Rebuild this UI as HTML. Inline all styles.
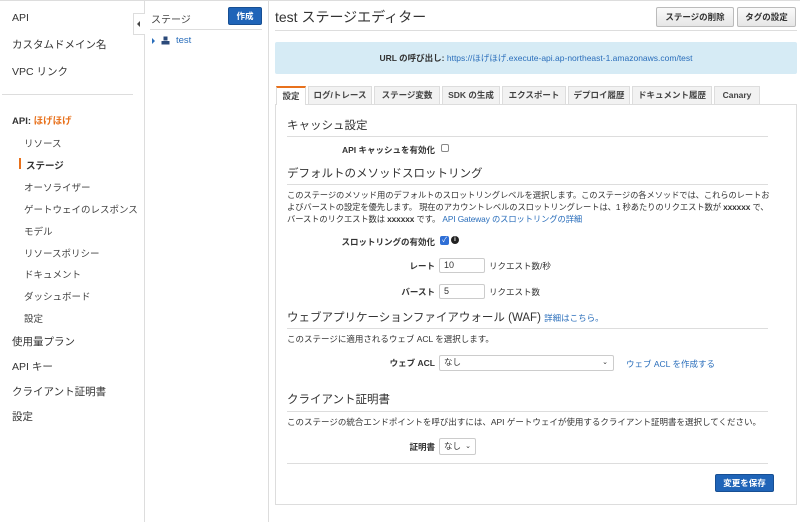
<!DOCTYPE html>
<html><head><meta charset="utf-8"><style>
*{box-sizing:border-box;margin:0;padding:0}
body{width:800px;height:522px;background:#fff;font-family:"Liberation Sans","Noto Sans CJK JP",sans-serif;color:#333;position:relative;overflow:hidden;font-size:9px}
.a{position:absolute;white-space:nowrap}
.nav{font-size:10.5px;color:#333}
.sub{font-size:9.5px;color:#444}
.btn{position:absolute;border:1px solid #bbb;border-radius:2px;background:linear-gradient(#fafafa,#e6e6e6);font-size:8.5px;font-weight:bold;color:#333;text-align:center}
.pbtn{position:absolute;background:#1f64b8;border:1px solid #174f93;border-radius:2px;color:#fff;font-weight:bold;font-size:8.5px;text-align:center}
.tab{position:absolute;top:86px;height:18px;background:#f2f2f2;border:1px solid #ddd;border-bottom:none;font-size:8.5px;font-weight:bold;color:#444;text-align:center;line-height:17px}
.h{position:absolute;font-size:11.5px;color:#333;left:287px}
.line{position:absolute;left:287px;width:481px;height:1px;background:#ddd}
.lbl{position:absolute;font-size:8.5px;font-weight:bold;color:#333;text-align:right;white-space:nowrap}
.inp{position:absolute;border:1px solid #ccc;border-radius:2px;background:#fff;font-size:9px;padding-left:4px;line-height:13px}
.link{color:#2a6ebb}
</style></head><body>
<div class="a" style="left:0;top:0;width:800px;height:1px;background:#ddd"></div>
<div class="a" style="left:144px;top:0;width:1px;height:522px;background:#ddd"></div>
<div class="a" style="left:268px;top:0;width:1px;height:522px;background:#ddd"></div>
<div class="a" style="left:133px;top:13px;width:12px;height:22px;background:#fff;border:1px solid #ddd;border-right:none"></div>
<div class="a" style="left:137px;top:21px;width:0;height:0;border-top:3px solid transparent;border-bottom:3px solid transparent;border-right:3px solid #444"></div>

<div class="a nav" style="left:12px;top:12px">API</div>
<div class="a nav" style="left:12px;top:37px">カスタムドメイン名</div>
<div class="a nav" style="left:12px;top:64px">VPC リンク</div>
<div class="a" style="left:2px;top:94px;width:131px;height:1px;background:#ddd"></div>
<div class="a" style="left:12px;top:113px;font-size:9.5px;font-weight:bold">API: <span style="color:#e8711c">ほげほげ</span></div>
<div class="a sub" style="left:24px;top:136px">リソース</div>
<div class="a" style="left:19px;top:158px;width:2px;height:11px;background:#e8711c"></div>
<div class="a sub" style="left:26px;top:158px;font-weight:bold;color:#333">ステージ</div>
<div class="a sub" style="left:24px;top:180px">オーソライザー</div>
<div class="a sub" style="left:24px;top:202px">ゲートウェイのレスポンス</div>
<div class="a sub" style="left:24px;top:224px">モデル</div>
<div class="a sub" style="left:24px;top:246px">リソースポリシー</div>
<div class="a sub" style="left:24px;top:267px">ドキュメント</div>
<div class="a sub" style="left:24px;top:289px">ダッシュボード</div>
<div class="a sub" style="left:24px;top:311px">設定</div>
<div class="a nav" style="left:12px;top:334px">使用量プラン</div>
<div class="a nav" style="left:12px;top:359px">API キー</div>
<div class="a nav" style="left:12px;top:384px">クライアント証明書</div>
<div class="a nav" style="left:12px;top:409px">設定</div>

<div class="a" style="left:151px;top:11px;font-size:10px;color:#444">ステージ</div>
<div class="pbtn" style="left:228px;top:7px;width:34px;height:18px;line-height:16px">作成</div>
<div class="a" style="left:150px;top:29px;width:112px;height:1px;background:#ddd"></div>
<div class="a" style="left:152px;top:38px;border-top:3px solid transparent;border-bottom:3px solid transparent;border-left:3px solid #2a6ebb"></div>
<svg class="a" style="left:161px;top:36px" width="9" height="9" viewBox="0 0 9 9"><rect x="2.5" y="0.5" width="4" height="4" fill="#2b4a7a"/><rect x="0.5" y="5" width="8" height="3.5" fill="#2b4a7a"/></svg>
<div class="a" style="left:176px;top:35px;font-size:9.5px;color:#2a6ebb">test</div>

<div class="a" style="left:275px;top:7px;font-size:14px;color:#333">test ステージエディター</div>
<div class="btn" style="left:656px;top:7px;width:78px;height:20px;line-height:18px">ステージの削除</div>
<div class="btn" style="left:737px;top:7px;width:59px;height:20px;line-height:18px">タグの設定</div>
<div class="a" style="left:275px;top:30px;width:522px;height:1px;background:#ddd"></div>
<div class="a" style="left:275px;top:42px;width:522px;height:32px;background:#d6ebf5;border-radius:2px;text-align:center;line-height:32px;font-size:8.5px"><b>URL の呼び出し:</b> <span class="link">https://ほげほげ.execute-api.ap-northeast-1.amazonaws.com/test</span></div>

<div class="a" style="left:275px;top:104px;width:522px;height:401px;border:1px solid #ddd"></div>
<div class="tab" style="left:276px;width:30px;background:#fff;border-top:2px solid #e8711c;height:19px">設定</div>
<div class="tab" style="left:308px;width:64px">ログ/トレース</div>
<div class="tab" style="left:374px;width:66px">ステージ変数</div>
<div class="tab" style="left:442px;width:58px">SDK の生成</div>
<div class="tab" style="left:502px;width:64px">エクスポート</div>
<div class="tab" style="left:568px;width:62px">デプロイ履歴</div>
<div class="tab" style="left:632px;width:80px">ドキュメント履歴</div>
<div class="tab" style="left:714px;width:46px">Canary</div>

<div class="h" style="top:117px">キャッシュ設定</div>
<div class="line" style="top:136px"></div>
<div class="lbl" style="right:365px;top:144px">API キャッシュを有効化</div>
<div class="a" style="left:441px;top:144px;width:8px;height:8px;border:1px solid #888;border-radius:2px"></div>
<div class="h" style="top:165px">デフォルトのメソッドスロットリング</div>
<div class="line" style="top:184px"></div>
<div class="a" style="left:287px;top:189px;font-size:8.3px;letter-spacing:-0.1px;line-height:12px;color:#333">このステージのメソッド用のデフォルトのスロットリングレベルを選択します。このステージの各メソッドでは、これらのレートお<br>よびバーストの設定を優先します。 現在のアカウントレベルのスロットリングレートは、1 秒あたりのリクエスト数が <b>xxxxxx</b> で、<br>バーストのリクエスト数は <b>xxxxxx</b> です。 <span class="link">API Gateway のスロットリングの詳細</span></div>
<div class="lbl" style="right:365px;top:236px">スロットリングの有効化</div>
<div class="a" style="left:440px;top:236px;width:9px;height:9px;background:#2f6fd6;border-radius:2px;color:#fff;font-size:7px;line-height:9px;text-align:center">✓</div>
<div class="a" style="left:451px;top:236px;width:8px;height:8px;background:#222;border-radius:50%;color:#fff;font-size:6px;line-height:8px;text-align:center;font-weight:bold">i</div>
<div class="lbl" style="right:365px;top:260px">レート</div>
<div class="inp" style="left:439px;top:258px;width:46px;height:15px">10</div>
<div class="a" style="left:489px;top:260px;font-size:8.5px">リクエスト数/秒</div>
<div class="lbl" style="right:365px;top:286px">バースト</div>
<div class="inp" style="left:439px;top:284px;width:46px;height:15px">5</div>
<div class="a" style="left:489px;top:286px;font-size:8.5px">リクエスト数</div>

<div class="h" style="top:309px">ウェブアプリケーションファイアウォール (WAF) <span class="link" style="font-size:8.5px">詳細はこちら。</span></div>
<div class="line" style="top:328px"></div>
<div class="a" style="left:287px;top:333px;font-size:8.5px">このステージに適用されるウェブ ACL を選択します。</div>
<div class="lbl" style="right:365px;top:357px">ウェブ ACL</div>
<div class="inp" style="left:439px;top:355px;width:175px;height:16px;font-size:8.5px">なし<span style="position:absolute;right:5px;top:0;font-size:7px">⌄</span></div>
<div class="a link" style="left:626px;top:358px;font-size:8.5px">ウェブ ACL を作成する</div>

<div class="h" style="top:391px">クライアント証明書</div>
<div class="line" style="top:411px"></div>
<div class="a" style="left:287px;top:416px;font-size:8.5px">このステージの統合エンドポイントを呼び出すには、API ゲートウェイが使用するクライアント証明書を選択してください。</div>
<div class="lbl" style="right:365px;top:441px">証明書</div>
<div class="inp" style="left:439px;top:438px;width:37px;height:17px;font-size:8.5px;line-height:15px">なし<span style="position:absolute;right:4px;top:0;font-size:7px">⌄</span></div>
<div class="line" style="top:463px"></div>
<div class="pbtn" style="left:715px;top:474px;width:59px;height:18px;line-height:16px">変更を保存</div>
</body></html>
